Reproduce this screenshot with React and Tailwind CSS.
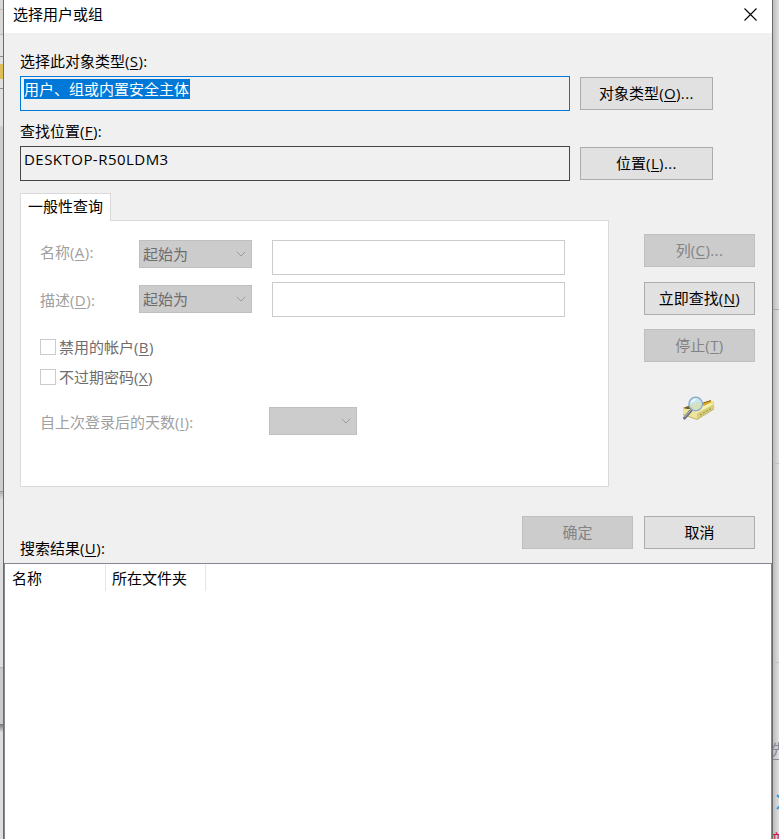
import clsx from 'clsx';

// Label with an underlined access key, e.g. 列(C)...
const KeyLabel = ({ text, hotkey, suffix = '' }) => (
  <span className="whitespace-pre">
    {text}
    <span className="tracking-[0.4px]">
      (<span className="underline decoration-1 underline-offset-2">{hotkey}</span>){suffix}
    </span>
  </span>
);

const Button = ({ children, disabled, className }) => (
  <button
    disabled={disabled}
    className={clsx(
      'flex h-[33px] shrink-0 items-center justify-center border pb-px',
      disabled ? 'border-[#bfbfbf] bg-[#cccccc] text-[#838383]' : 'border-[#adadad] bg-[#e1e1e1] text-black',
      className
    )}
  >
    {children}
  </button>
);

const Select = ({ value, className }) => (
  <div
    className={clsx(
      'flex h-7 shrink-0 items-center justify-between border border-[#bfbfbf] bg-[#cccccc] pr-[5px] pl-[3px] text-[#6d6d6d]',
      className
    )}
  >
    <span>{value}</span>
    <svg width="10" height="6" viewBox="0 0 10 6" fill="none" stroke="#9d9d9d">
      <path d="M0.7 0.7 L5 5 L9.3 0.7" />
    </svg>
  </div>
);

const Checkbox = ({ children }) => (
  <div className="flex h-4 items-center gap-[3px] text-[#6d6d6d]">
    <div className="size-4 border border-[#cccccc] bg-white" />
    {children}
  </div>
);

const SearchIcon = () => (
  <svg width="48" height="40" viewBox="0 0 48 40">
    <path d="M8 20 L28 14 L39 13 L39.5 20 L22 31.5 L8 26 Z" fill="#e9df8c" />
    <path d="M8 20 L25 14 L39 16 L22 25 Z" fill="#f7f1b4" />
    <path d="M8 21 L22 25.5 L22 31.5 L8 26.5 Z" fill="#eee49c" />
    <path d="M22 25.5 L39 16 L39 21 L22 31.5 Z" fill="#d8cd78" />
    <path d="M8 20 L16 17 L20 21 L12 21 Z" fill="#6e5a22" />
    <path d="M25 16.5 L35 12.5 L36.5 14 L29 18 Z" fill="#d9a521" />
    <path d="M25 16 L36 12.5" stroke="#8b6716" />
    <path d="M25 27 L37 20" stroke="#8f854a" strokeDasharray="2 1.5" />
    <path d="M8 26.5 L22 31.5 L39 21" fill="none" stroke="#b3a85e" strokeWidth="0.8" />
    <path d="M16 22.5 L9.5 30" stroke="#696d78" strokeWidth="3" strokeLinecap="round" />
    <path d="M15.5 22.5 L9.5 29.2" stroke="#c5c8d1" strokeLinecap="round" />
    <circle cx="20.7" cy="16" r="6.8" fill="#c3e2ef" fillOpacity="0.93" stroke="#8ba8c5" strokeWidth="1.3" />
    <path d="M15 18 Q21 13 26.5 15 Q27 20 21 22 Q16 21 15 18 Z" fill="#d9dfae" opacity="0.8" />
    <path d="M15.5 15 Q17 10.5 22 10.8 Q20 14 15.5 15 Z" fill="#eefaff" />
  </svg>
);

// Slivers of the windows behind the dialog
const LeftEdge = () => (
  <div className="flex w-[3px] shrink-0 flex-col bg-[#dedede]">
    <div className="h-[10px] border-b border-[#bcbcbc] bg-[#d8d8d8]" />
    <div className="h-[25px] border-b border-[#bcbcbc] bg-[#d8d8d8]" />
    <div className="h-[22px] border-b border-[#8d8d8d] bg-[#e2e2e2]" />
    <div className="h-[7px] bg-[#e0e0e0]" />
    <div className="h-[15px] bg-[#dfbd59]" />
    <div className="h-[10px] border-b border-[#8d8d8d] bg-[#e0e0e0]" />
    <div className="h-[37px] bg-[#e0e0e0]" />
    <div className="h-[366px] border-b border-[#9a9a9a] bg-[#cdcdcd]" />
    <div className="h-[8px] bg-linear-to-b from-[#b5b5b5] to-[#dedede]" />
    <div className="h-[168px] border-b border-[#b5b5b5]" />
    <div className="h-[56px] bg-[#cacaca]" />
    <div className="h-[8px] bg-linear-to-b from-[#777777] to-[#dadada]" />
  </div>
);

const RightEdge = () => (
  <div className="flex w-[6px] shrink-0 flex-col overflow-hidden bg-linear-to-r from-[#bcbcbc] to-[#dfdfdf]">
    <div className="h-[310px] shrink-0 border-b border-[#a9a9a9]" />
    <div className="h-[154px] shrink-0 border-b border-[#c0c0c0]" />
    <div className="h-[199px] shrink-0 border-b border-[#c0c0c0]" />
    <div className="flex h-[97px] shrink-0 items-end border-b border-[#8a8a8a]">
      <span className="-ml-0.5 text-[#8a8496]">先</span>
    </div>
    <svg className="mt-[34px] shrink-0" width="6" height="16" viewBox="0 0 6 16" stroke="#3a9bd8" strokeWidth="2">
      <path d="M4 1 L7 4 M4 15 L7 12" />
    </svg>
    <span className="mt-[19px] -ml-1 shrink-0 leading-[20px] text-[#c8203c]">变</span>
  </div>
);

const App = () => (
  <div className="flex h-[839px] w-[779px] overflow-hidden font-['Open_Sans','Noto_Sans_CJK_SC',sans-serif] text-[15px] leading-5 text-black">
    <LeftEdge />
    <div className="flex w-[770px] shrink-0 flex-col border-x border-[#6b6b6b] bg-[#f0f0f0]">
      {/* Title bar */}
      <div className="flex h-[33px] shrink-0 items-start justify-between bg-white pr-[15px] pl-[9px]">
        <span className="mt-1">选择用户或组</span>
        <svg className="mt-2" width="13" height="13" viewBox="0 0 13 13" stroke="#000" strokeWidth="1.1">
          <path d="M0.5 0.5 L12.5 12.5 M12.5 0.5 L0.5 12.5" />
        </svg>
      </div>

      {/* Object type and location */}
      <div className="mt-[18px] px-4">
        <div className="h-[25px]">
          <KeyLabel text="选择此对象类型" hotkey="S" suffix=":" />
        </div>
        <div className="flex items-center gap-2.5">
          <div className="h-[35px] w-[550px] border border-[#0078d7] p-0.5 pl-[3px]">
            <span className="block h-5 w-[166px] bg-[#0078d7] leading-5 text-white">用户、组或内置安全主体</span>
          </div>
          <Button className="w-[133px]">
            <KeyLabel text="对象类型" hotkey="O" suffix="..." />
          </Button>
        </div>
        <div className="mt-[10px] h-[25px]">
          <KeyLabel text="查找位置" hotkey="F" suffix=":" />
        </div>
        <div className="flex items-center gap-2.5">
          <div className="h-[35px] w-[550px] border border-[#464646] p-0.5 pl-[3px] tracking-[0.47px]">
            DESKTOP-R50LDM3
          </div>
          <Button className="w-[133px]">
            <KeyLabel text="位置" hotkey="L" suffix="..." />
          </Button>
        </div>
      </div>

      {/* Query tab and search buttons */}
      <div className="mt-3 flex h-[294px] shrink-0 justify-between pr-[17px] pl-4">
        <div className="flex w-[589px] flex-col">
          <div className="z-10 -mb-px h-7 w-[91px] shrink-0 border border-b-0 border-[#d9d9d9] bg-white pt-0.5 pl-[7px]">
            一般性查询
          </div>
          <div className="flex-1 border border-[#d9d9d9] bg-white pt-[19px] pl-[19px] text-[#a0a0a0]">
            <div className="flex h-[42px] items-start">
              <div className="mt-0.5 w-[99px]">
                <KeyLabel text="名称" hotkey="A" suffix=":" />
              </div>
              <Select value="起始为" className="w-[113px]" />
              <div className="ml-5 h-[35px] w-[293px] border border-[#cccccc]" />
            </div>
            <div className="flex h-[35px] items-start">
              <div className="mt-2 w-[99px]">
                <KeyLabel text="描述" hotkey="D" suffix=":" />
              </div>
              <Select value="起始为" className="mt-[3px] w-[113px]" />
              <div className="ml-5 h-[35px] w-[293px] border border-[#cccccc]" />
            </div>
            <div className="mt-[22px] space-y-3.5">
              <Checkbox>
                <KeyLabel text="禁用的帐户" hotkey="B" />
              </Checkbox>
              <Checkbox>
                <KeyLabel text="不过期密码" hotkey="X" />
              </Checkbox>
            </div>
            <div className="mt-[22px] flex items-center">
              <div className="w-[229px] pt-0.5">
                <KeyLabel text="自上次登录后的天数" hotkey="I" suffix=":" />
              </div>
              <Select className="w-[88px]" />
            </div>
          </div>
        </div>
        <div className="flex w-[111px] flex-col items-center pt-[41px]">
          <Button disabled className="w-full">
            <KeyLabel text="列" hotkey="C" suffix="..." />
          </Button>
          <Button className="mt-[15px] w-full">
            <KeyLabel text="立即查找" hotkey="N" />
          </Button>
          <Button disabled className="mt-3.5 w-full">
            <KeyLabel text="停止" hotkey="T" />
          </Button>
          <div className="mt-[26px] mr-0.5">
            <SearchIcon />
          </div>
        </div>
      </div>

      {/* Dialog buttons */}
      <div className="mt-[29px] flex h-[47px] shrink-0 items-start pr-[17px] pl-4">
        <div className="mt-[22px] flex-1">
          <KeyLabel text="搜索结果" hotkey="U" suffix=":" />
        </div>
        <Button disabled className="w-[111px]">确定</Button>
        <Button className="ml-[11px] w-[111px]">取消</Button>
      </div>

      {/* Results */}
      <div className="flex-1 border border-b-0 border-[#828790] bg-white pt-px">
        <div className="flex h-[26px] leading-[26px]">
          <div className="w-[101px] border-r border-[#e5e5e5] pl-[7px]">名称</div>
          <div className="w-[100px] border-r border-[#e5e5e5] pl-1.5">所在文件夹</div>
        </div>
      </div>
    </div>
    <RightEdge />
  </div>
);

export default App;
